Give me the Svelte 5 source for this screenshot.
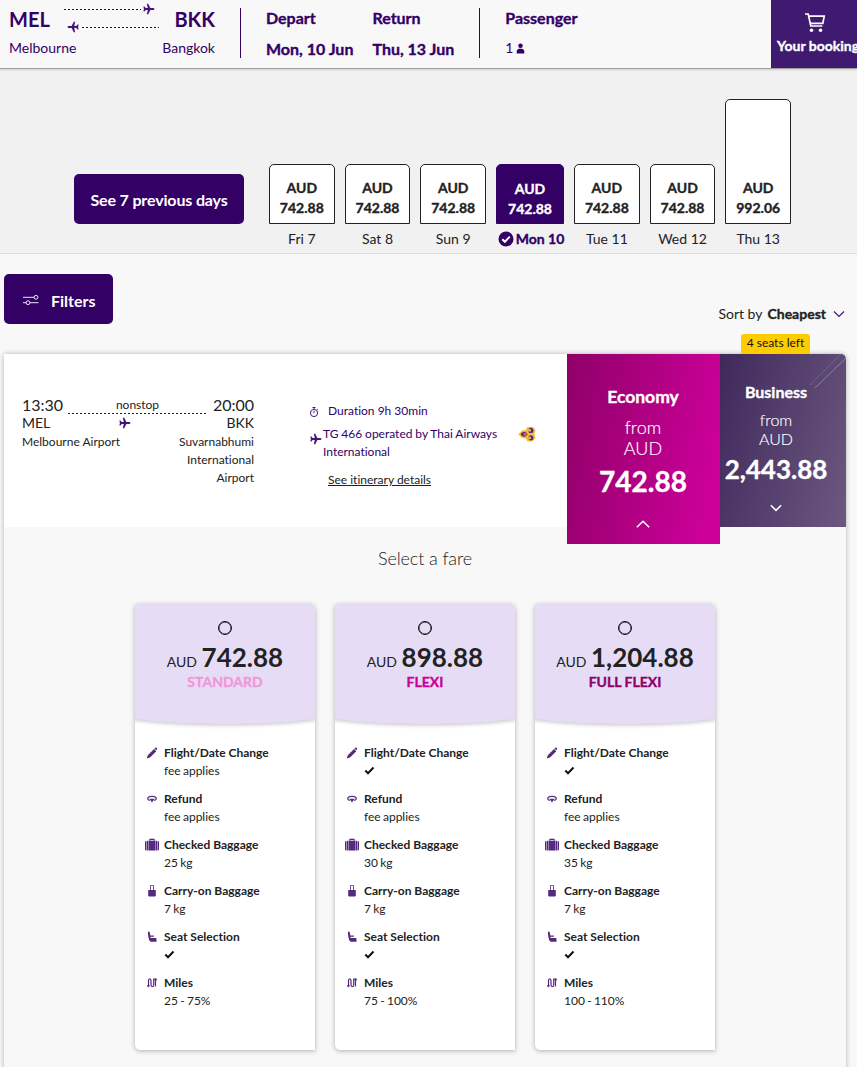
<script lang="ts">
  const days = [
    { label: 'Fri 7', price: '742.88' },
    { label: 'Sat 8', price: '742.88' },
    { label: 'Sun 9', price: '742.88' },
    { label: 'Mon 10', price: '742.88' },
    { label: 'Tue 11', price: '742.88' },
    { label: 'Wed 12', price: '742.88' },
    { label: 'Thu 13', price: '992.06', tall: true }
  ];

  // null means the feature is included and shows a tick
  const fares = [
    { id: 'standard', name: 'STANDARD', price: '742.88', values: ['fee applies', 'fee applies', '25 kg', '7 kg', null, '25 - 75%'] },
    { id: 'flexi', name: 'FLEXI', price: '898.88', values: [null, 'fee applies', '30 kg', '7 kg', null, '75 - 100%'] },
    { id: 'full', name: 'FULL FLEXI', price: '1,204.88', values: [null, 'fee applies', '35 kg', '7 kg', null, '100 - 110%'] }
  ];

  const features = [
    { icon: 'pencil', label: 'Flight/Date Change' },
    { icon: 'refund', label: 'Refund' },
    { icon: 'case', label: 'Checked Baggage' },
    { icon: 'carry', label: 'Carry-on Baggage' },
    { icon: 'seat', label: 'Seat Selection' },
    { icon: 'miles', label: 'Miles' }
  ];

  let selectedDay = $state('Mon 10');
  let selectedFare = $state('');
</script>

{#snippet plane()}
  <svg class="plane" viewBox="0 0 12 12" width="12" height="12">
    <path d="M11.8 6l-1.3.9H7.4L5.200 11.2H3.800l1-4.300H2.700L1.500 8.400H.4L.9 6 .4 3.600h1.100l1.200 1.500h2.100l-1-4.300h1.400l2.200 4.300h3.100z" />
  </svg>
{/snippet}

{#snippet featureIcon(name: string)}
  <svg class="feature-icon" viewBox="0 0 14 14" width="14" height="14">
    {#if name === 'pencil'}
      <path d="M1.800 12.400l.8-3L9 3l2.300 2.300L5 11.500zM9.500 2.500l1-.9c.8-.5 2.100.8 1.600 1.700l-.9 1z" />
    {:else if name === 'refund'}
      <path class="line" d="M4.800 8.500C1.400 7.600 2.200 4.300 7 4.300s5.600 3.300 2.200 4.200" />
      <path d="M4.400 6.800h5.200L7 10.600z" />
    {:else if name === 'case'}
      <path d="M0 3.200h1.400V12.500H1l-1-.8zM12.600 3.200H14v8.500l-1 .8h-.4zM1.900 2.700h1.200v9.800H1.900zM10.900 2.700h1.200v9.800h-1.200zM3.500 2.700h7v9.800h-7z" />
      <path class="line" d="M5 2.700V1.400h4v1.300" />
    {:else if name === 'carry'}
      <path class="line thin" d="M5.500 6.500v-5h3v5" />
      <path d="M3.200 6h7.600v5.600l-.8.8H4l-.8-.8z" />
    {:else if name === 'seat'}
      <path d="M2.800 1.800h1.900l.6 3.700h3.500v1.200H5.500l.2 1.300h4.700c.8 0 1.100.5 1.100 1v2.700H5.700C3.700 11.700 3.100 5 2.800 1.800z" />
    {:else}
      <path class="line" d="M3.500 11V4.800c0-2.700 2.500-2.700 2.500 0v4c0 2.500 2.700 2.500 2.700 0V3h1.800v7.500" />
      <path d="M9.200 4.200L10.800 2l1.700 2.200zM1.800 9.200l1.500 2.300L5 9.200z" />
    {/if}
  </svg>
{/snippet}

<div class="page">
  <header class="summary">
    <div class="route">
      <div class="city">
        <strong>MEL</strong>
        <span>Melbourne</span>
      </div>
      <div class="legs">
        <div class="leg"><i></i>{@render plane()}</div>
        <div class="leg back">{@render plane()}<i></i></div>
      </div>
      <div class="city end">
        <strong>BKK</strong>
        <span>Bangkok</span>
      </div>
    </div>
    <div class="trip-dates">
      <div class="info">
        <b>Depart</b>
        <b>Mon, 10 Jun</b>
      </div>
      <div class="info">
        <b>Return</b>
        <b>Thu, 13 Jun</b>
      </div>
    </div>
    <div class="info passengers">
      <b>Passenger</b>
      <span class="pax">
        1
        <svg viewBox="0 0 10 12" width="9" height="11">
          <circle cx="5" cy="3" r="2.500" />
          <path d="M.8 11.500V9.300C.8 7.500 2.500 6.500 3.300 6.300h3.400c.8.2 2.500 1.200 2.500 3v2.200z" />
        </svg>
      </span>
    </div>
    <button class="booking">
      <svg viewBox="0 0 22 20" width="22" height="20">
        <path d="M1 1h3.200l2.600 12h11.500M4.800 3.200h15.400L18.800 10.300H6.300" />
        <circle cx="7.500" cy="17.300" r="1.800" />
        <circle cx="16.500" cy="17.300" r="1.800" />
      </svg>
      <b>Your booking</b>
    </button>
  </header>

  <section class="calendar">
    <button class="previous">See 7 previous days</button>
    <div class="days">
      {#each days as day}
        <button class="day" class:selected={selectedDay === day.label} onclick={() => (selectedDay = day.label)}>
          <span class="bar" class:tall={day.tall}>
            <span>AUD</span>
            <span>{day.price}</span>
          </span>
          <span class="day-label">
            {#if selectedDay === day.label}
              <svg viewBox="0 0 16 16" width="16" height="16">
                <circle cx="8" cy="8" r="7.500" />
                <path d="M4.300 8.300l2.600 2.500 4.900-5.200" />
              </svg>
            {/if}
            {day.label}
          </span>
        </button>
      {/each}
    </div>
  </section>

  <div class="toolbar">
    <button class="filters">
      <svg viewBox="0 0 16 12" width="16" height="12">
        <path d="M0 3.300h11M0 8.700h3M7 8.700h8.500" />
        <circle cx="13" cy="3.300" r="1.900" />
        <circle cx="5" cy="8.700" r="1.900" />
      </svg>
      Filters
    </button>
    <div class="sort">
      Sort by <b>Cheapest</b>
      <svg class="chevron" viewBox="0 0 12 8" width="12" height="8"><path d="M1 1.500l5 5 5-5" /></svg>
    </div>
  </div>

  <main class="result">
    <div class="flight">
      <div class="schedule">
        <div class="stop">
          <span class="time">13:30</span>
          <span class="code">MEL</span>
          <span class="airport">Melbourne Airport</span>
        </div>
        <div class="stop end">
          <span class="time">20:00</span>
          <span class="code">BKK</span>
          <span class="airport">Suvarnabhumi International Airport</span>
        </div>
        <div class="path">
          <span>nonstop</span>
          {@render plane()}
        </div>
      </div>

      <div class="details">
        <div class="detail duration">
          <svg viewBox="0 0 10 12" width="10" height="12">
            <circle cx="5" cy="7" r="3.600" />
            <path d="M5 5v2.200M3.500 1.500h3M5 1.500v1.800M8 3.200l.8.8" />
          </svg>
          <span>Duration 9h 30min</span>
        </div>
        <div class="detail carrier">
          {@render plane()}
          <span>TG 466 operated by Thai Airways International</span>
          <svg class="airline" viewBox="0 0 18 16" width="18" height="16">
            <path class="gold" d="M.2 8.200L4 4.400 7.500 4 9.500.9l5.200-.2L17.500 4l-1 4.200 1 3.800-2.800 3.300-5.200.2-2-3L4 12z" />
            <path class="violet" d="M2.600 8.200C4.300 4.800 8 4.800 9.600 8.200 8 11.500 4.300 11.500 2.600 8.200z" />
            <circle class="violet" cx="12.800" cy="4.400" r="2.600" />
            <circle class="violet" cx="12.800" cy="11.800" r="2.600" />
            <path class="gold" d="M10 2.500l3.200 1-.7 2.300-2.200-.3zM10 13.700l3.200-1-.7-2.300-2.200.3z" />
            <circle class="rose" cx="7" cy="8.200" r="1.700" />
          </svg>
        </div>
        <a class="itinerary" href="#itinerary">See itinerary details</a>
      </div>

      <button class="cabin economy">
        <b class="cabin-name">Economy</b>
        <span class="from">from</span>
        <span class="from">AUD</span>
        <b class="cabin-price">742.88</b>
        <svg class="chevron" viewBox="0 0 14 8" width="14" height="8"><path d="M.8 7.200L7 1.200l6.200 6" /></svg>
      </button>
      <button class="cabin business">
        <em class="badge">4 seats left</em>
        <svg class="shine" viewBox="0 0 36 36" width="36" height="36">
          <path d="M0 31L31 0" />
          <path class="bright" d="M5 34L36 4" />
        </svg>
        <b class="cabin-name">Business</b>
        <span class="from">from</span>
        <span class="from">AUD</span>
        <b class="cabin-price">2,443.88</b>
        <svg class="chevron" viewBox="0 0 12 8" width="12" height="8"><path d="M.8 1.200L6 6.400l5.200-5.200" /></svg>
      </button>
    </div>

    <h2>Select a fare</h2>

    <div class="fares">
      {#each fares as fare}
        <article class="fare">
          <label class="fare-head">
            <input type="radio" name="fare" value={fare.id} bind:group={selectedFare} />
            <span class="fare-price">AUD <b>{fare.price}</b></span>
            <span class="fare-name {fare.id}">{fare.name}</span>
          </label>
          <ul>
            {#each features as feature, i}
              <li>
                {@render featureIcon(feature.icon)}
                <div>
                  <b>{feature.label}</b>
                  {#if fare.values[i]}
                    <span class="value">{fare.values[i]}</span>
                  {:else}
                    <span class="tick">
                      <svg viewBox="0 0 11 9" width="11" height="9"><path d="M1.300 4.500L4 7.200 9.500 1.500" /></svg>
                    </span>
                  {/if}
                </div>
              </li>
            {/each}
          </ul>
        </article>
      {/each}
    </div>
  </main>
</div>

<style>
  :global(body) {
    background: #f8f8f8;
  }

  .page {
    height: 1067px;
    overflow: hidden;
    display: flex;
    flex-direction: column;
    box-sizing: border-box;
    font-family: Lato, 'Liberation Sans', sans-serif;
    font-size: 14px;
    font-variant-ligatures: none;
    color: #222;
    background: #f8f8f8;
  }

  .page * {
    box-sizing: border-box;
  }

  button {
    font: inherit;
    font-variant-ligatures: none;
    color: inherit;
    border: none;
    padding: 0;
    cursor: pointer;
  }

  svg {
    display: block;
    flex: none;
  }

  .plane {
    fill: #45147a;
  }

  /* header */
  .summary {
    display: flex;
    align-items: flex-start;
    flex: none;
    height: 69px;
    color: #330066;
    border-bottom: 1px solid #a0a0a0;
    box-shadow: 0 1px 2px rgba(0, 0, 0, 0.15);
    position: relative;
  }

  .route {
    display: flex;
    width: 241px;
    height: 50px;
    margin-top: 8px;
    padding: 0 25px 0 9px;
    border-right: 1px solid #330066;
  }

  .city {
    display: flex;
    flex-direction: column;
    width: 50px;
    white-space: nowrap;
  }

  .city strong {
    font-size: 20px;
    line-height: 22px;
    font-weight: 700;
  }

  .city span {
    line-height: 18px;
    margin-top: 9px;
  }

  .city.end {
    align-items: flex-end;
  }

  .legs {
    flex: 1;
    display: flex;
    flex-direction: column;
    gap: 6px;
    margin: -5px 4px 0 5px;
  }

  .leg {
    display: flex;
    align-items: center;
    gap: 2px;
  }

  .leg i {
    width: 77px;
    height: 1px;
    background: repeating-linear-gradient(90deg, #330066 0 2px, transparent 2px 4px);
  }

  .leg.back {
    gap: 3px;
    padding-left: 3px;
  }

  .leg.back .plane {
    transform: scaleX(-1);
  }

  .trip-dates {
    display: flex;
    gap: 19px;
    height: 50px;
    margin-top: 8px;
    padding: 0 25px;
    border-right: 1px solid #330066;
  }

  .info {
    display: flex;
    flex-direction: column;
    gap: 11px;
  }

  .info b {
    font-size: 16px;
    line-height: 20px;
    font-weight: 700;
  }

  /* slightly heavier than Lato Bold */
  .info b,
  .booking b,
  .sort b,
  .bar,
  .cabin b,
  .fare-name,
  .selected .day-label {
    -webkit-text-stroke: 0.35px currentColor;
  }

  .passengers {
    margin: 8px 0 0 25px;
  }

  .pax {
    display: flex;
    gap: 3px;
    align-items: center;
    line-height: 18px;
  }

  .pax svg {
    fill: #330066;
  }

  .booking {
    display: flex;
    flex-direction: column;
    align-items: flex-start;
    width: 86px;
    height: 68px;
    margin-left: auto;
    padding: 13px 0 0 6px;
    overflow: hidden;
    white-space: nowrap;
    background: #3f1a70;
    color: #fff;
  }

  .booking svg {
    margin-left: 27px;
    fill: none;
    stroke: #fff;
    stroke-width: 1.7;
  }

  .booking circle {
    fill: #fff;
    stroke: none;
  }

  .booking b {
    margin-top: 3px;
    line-height: 20px;
  }

  /* date bars */
  .calendar {
    display: flex;
    align-items: flex-end;
    flex: none;
    height: 185px;
    padding: 0 66px 5px 74px;
    background: #f1f1f1;
    border-bottom: 1px solid #ddd;
  }

  .previous {
    width: 170px;
    height: 50px;
    margin-bottom: 24px;
    border-radius: 5px;
    background: #330066;
    color: #fff;
    font-size: 16px;
    font-weight: 700;
    letter-spacing: -0.15px;
  }

  .days {
    flex: 1;
    display: flex;
    align-items: flex-end;
    gap: 10px;
    margin-left: 25px;
  }

  .day {
    flex: 1;
    display: flex;
    flex-direction: column;
    background: none;
  }

  .bar {
    display: flex;
    flex-direction: column;
    justify-content: flex-end;
    height: 60px;
    padding-bottom: 5px;
    border: 1px solid #222;
    border-radius: 5px 5px 0 0;
    background: #fff;
    font-weight: 700;
    line-height: 20px;
  }

  .bar.tall {
    height: 125px;
  }

  .day-label {
    display: flex;
    align-items: center;
    justify-content: center;
    gap: 2px;
    height: 24px;
    padding-top: 5px;
    line-height: 18px;
    white-space: nowrap;
  }

  .selected {
    flex: none;
    width: 68px;
  }

  .selected .bar {
    padding-bottom: 4px;
    background: #330066;
    border-color: #330066;
    color: #fff;
  }

  .selected .day-label {
    padding-left: 2px;
    color: #330066;
    font-weight: 700;
  }

  .day-label svg {
    fill: #330066;
  }

  .day-label path {
    fill: none;
    stroke: #fff;
    stroke-width: 2;
  }

  /* filters and sorting */
  .toolbar {
    display: flex;
    justify-content: space-between;
    align-items: flex-start;
    flex: none;
    height: 100px;
    padding: 20px 12px 0 4px;
  }

  .filters {
    display: flex;
    align-items: center;
    gap: 12px;
    width: 109px;
    height: 50px;
    padding: 2px 0 0 19px;
    border-radius: 5px;
    background: #330066;
    color: #fff;
    font-size: 16px;
    font-weight: 700;
  }

  .filters svg {
    fill: none;
    stroke: #fff;
    stroke-width: 0.9;
  }

  .sort {
    display: flex;
    align-items: center;
    gap: 5px;
    margin-top: 31px;
    line-height: 18px;
  }

  .chevron {
    fill: none;
    stroke: #fff;
    stroke-width: 1.5;
  }

  .sort .chevron {
    margin-left: 2px;
    stroke: #45147a;
    stroke-width: 1.2;
  }

  /* result card */
  .result {
    width: 842px;
    height: 800px;
    margin-left: 4px;
    flex: none;
    border-radius: 0 5px 0 0;
    background: #f8f8f8;
    box-shadow: 0 0 5px rgba(0, 0, 0, 0.3);
  }

  .flight {
    display: flex;
    align-items: flex-start;
    height: 173px;
    border-radius: 0 5px 0 0;
    background: #fff;
  }

  .schedule {
    position: relative;
    display: flex;
    justify-content: space-between;
    width: 250px;
    padding: 41px 0 0 18px;
  }

  .stop {
    display: flex;
    flex-direction: column;
  }

  .stop.end {
    width: 80px;
    align-items: flex-end;
    text-align: right;
  }

  .time {
    font-size: 16px;
    line-height: 19px;
  }

  .code {
    line-height: 17px;
  }

  .airport {
    font-size: 12px;
    line-height: 18px;
    margin-top: 2px;
  }

  .path {
    position: absolute;
    left: 64px;
    top: 42px;
    width: 139px;
    display: flex;
    flex-direction: column;
    align-items: center;
    font-size: 12px;
  }

  .path span {
    width: 100%;
    height: 18px;
    line-height: 18px;
    text-align: center;
    background: repeating-linear-gradient(90deg, #222 0 2px, transparent 2px 4px) bottom / 100% 1px no-repeat;
  }

  .path .plane {
    margin: 3px 25px 0 0;
  }

  .details {
    width: 313px;
    padding: 48px 0 0 55px;
    color: #330066;
    font-size: 12px;
    line-height: 18px;
  }

  .detail {
    display: flex;
  }

  .duration svg {
    margin: 4px 9px 0 0;
    fill: none;
    stroke: #45147a;
    stroke-width: 1;
  }

  .carrier {
    margin-top: 5px;
  }

  .carrier .plane {
    margin: 8px 0 0 1px;
  }

  .carrier span {
    width: 195px;
    margin-left: 1px;
    word-spacing: -0.2px;
  }

  .airline {
    margin-top: 1px;
  }

  .gold {
    fill: #f2be3c;
  }

  .violet {
    fill: #55297d;
  }

  .rose {
    fill: #d9557a;
  }

  .itinerary {
    display: block;
    margin: 8px 0 0 19px;
    padding-top: 2px;
    color: #222;
  }

  .cabin {
    position: relative;
    display: flex;
    flex-direction: column;
    align-items: center;
    flex: none;
    color: #fff;
  }

  .cabin-name {
    font-weight: 700;
  }

  .from {
    font-weight: 300;
    -webkit-text-stroke: 0.15px currentColor;
  }

  .economy {
    width: 153px;
    height: 190px;
    padding: 32px 1px 0 0;
    background: linear-gradient(100deg, #8f0068, #cc0099 90%);
    font-size: 18px;
    line-height: 21px;
  }

  .economy .cabin-name {
    font-size: 17.500px;
    margin-bottom: 10px;
  }

  .economy .cabin-price {
    font-size: 28px;
    line-height: 36px;
    margin-top: 4px;
  }

  .economy .chevron {
    margin-top: 21px;
  }

  .business {
    width: 126px;
    height: 173px;
    padding: 28px 14px 0 0;
    border-radius: 0 5px 0 0;
    background: linear-gradient(105deg, #3f295c, #6c5880);
    font-size: 16px;
    line-height: 19px;
  }

  .business .cabin-name {
    line-height: 20px;
    margin-bottom: 8px;
  }

  .business .cabin-price {
    font-size: 26px;
    line-height: 34px;
    margin-top: 4px;
  }

  .business .chevron {
    margin-top: 18px;
  }

  .badge {
    position: absolute;
    left: 21px;
    top: -20px;
    width: 69px;
    height: 20px;
    border-radius: 3px 3px 0 0;
    background: #fc0;
    color: #111;
    font-size: 12px;
    font-style: normal;
    line-height: 18px;
  }

  .shine {
    position: absolute;
    right: 0;
    top: 0;
    fill: none;
    stroke: rgba(255, 255, 255, 0.2);
    stroke-width: 0.7;
  }

  .bright {
    stroke: rgba(255, 255, 255, 0.45);
  }

  h2 {
    margin: 19px 0 0;
    font-size: 18px;
    font-weight: 300;
    line-height: 24px;
    letter-spacing: -0.12px;
    text-align: center;
  }

  /* fares */
  .fares {
    display: flex;
    gap: 20px;
    margin: 34px 0 0 131px;
  }

  .fare {
    width: 180px;
    height: 446px;
    border-radius: 3px 5px 0 5px;
    background: #fff;
    overflow: hidden;
    box-shadow: 0 1px 5px rgba(0, 0, 0, 0.3);
  }

  .fare-head {
    display: flex;
    flex-direction: column;
    align-items: center;
    height: 120px;
    margin: 0 -12px;
    padding-top: 17px;
    border-radius: 0 0 50% 50% / 0 0 10px 10px;
    background: #e6dcf6;
    box-shadow: 0 1px 4px rgba(0, 0, 0, 0.25);
  }

  input {
    appearance: none;
    width: 14px;
    height: 14px;
    margin: 0;
    border: 1px solid #111;
    border-radius: 50%;
    box-shadow: inset 0 0 0 0.5px #111;
  }

  input:checked {
    background: #330066;
  }

  .fare-price {
    margin-top: 7px;
    line-height: 30px;
  }

  .fare-price b {
    margin-left: 1px;
    font-size: 26px;
  }

  .fare-name {
    margin-top: -5px;
    font-weight: 700;
    line-height: 20px;
  }

  .standard {
    color: #ee99d6;
  }

  .flexi {
    color: #cc0099;
  }

  .full {
    color: #8f0068;
  }

  ul {
    display: flex;
    flex-direction: column;
    gap: 10px;
    margin: 0;
    padding: 20px 0 0 10px;
    list-style: none;
    font-size: 12px;
    line-height: 18px;
  }

  li {
    display: flex;
    gap: 5px;
  }

  li div {
    display: flex;
    flex-direction: column;
  }

  .value {
    word-spacing: -0.8px;
  }

  .feature-icon {
    margin-top: 2px;
    fill: #55297d;
  }

  .line {
    fill: none;
    stroke: #55297d;
    stroke-width: 1.2;
  }

  .thin {
    stroke-width: 0.8;
  }

  .tick {
    display: flex;
    align-items: center;
    height: 18px;
    padding-bottom: 2px;
  }

  .tick path {
    fill: none;
    stroke: #111;
    stroke-width: 2;
  }
</style>
